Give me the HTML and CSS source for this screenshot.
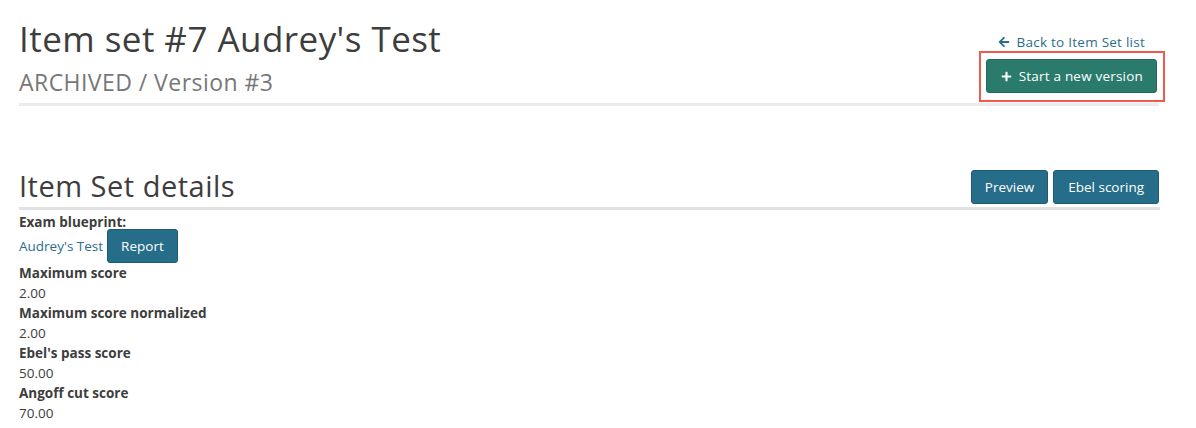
FILE: index.html
```html
<!DOCTYPE html>
<html>
<head>
<meta charset="utf-8">
<link rel="stylesheet" href="styles.css">
</head>
<body>
<div class="page">
  <header class="page-header">
    <div class="titles">
      <h1 class="title">Item set #7 Audrey's Test</h1>
      <div class="subtitle">ARCHIVED / Version #3</div>
    </div>
    <div class="header-actions">
      <a class="back-link" href="#"><svg class="arrow" viewBox="0 0 448 512" width="12" height="12"><path fill="currentColor" d="M257.5 445.1l-22.2 22.2c-9.4 9.4-24.6 9.4-33.9 0L7 273c-9.4-9.4-9.4-24.6 0-33.9L201.4 44.7c9.4-9.4 24.6-9.4 33.9 0l22.2 22.2c9.5 9.5 9.3 25-.4 34.3L136.6 216H424c13.3 0 24 10.7 24 24v32c0 13.3-10.7 24-24 24H136.6l120.5 114.8c9.8 9.3 10 24.8.4 34.3z"/></svg>Back to Item Set list</a>
      <div class="highlight">
        <button class="btn btn-green"><svg class="plus" viewBox="0 0 448 512" width="11" height="11"><path fill="currentColor" d="M416 208H272V64c0-17.67-14.33-32-32-32h-32c-17.67 0-32 14.33-32 32v144H32c-17.67 0-32 14.33-32 32v32c0 17.67 14.33 32 32 32h144v144c0 17.67 14.33 32 32 32h32c17.67 0 32-14.33 32-32V304h144c17.67 0 32-14.33 32-32v-32c0-17.67-14.33-32-32-32z"/></svg>Start a new version</button>
      </div>
    </div>
  </header>

  <section class="details">
    <div class="section-head">
      <h2 class="section-title">Item Set details</h2>
      <div class="section-actions">
        <button class="btn btn-blue">Preview</button>
        <button class="btn btn-blue btn-ebel">Ebel scoring</button>
      </div>
    </div>
    <dl class="fields">
      <dt>Exam blueprint:</dt>
      <dd class="blueprint"><a class="link" href="#">Audrey's Test</a><button class="btn btn-blue btn-report">Report</button></dd>
      <dt>Maximum score</dt>
      <dd>2.00</dd>
      <dt>Maximum score normalized</dt>
      <dd>2.00</dd>
      <dt>Ebel's pass score</dt>
      <dd>50.00</dd>
      <dt>Angoff cut score</dt>
      <dd>70.00</dd>
    </dl>
  </section>
</div>
</body>
</html>
```

FILE: styles.css
```css
* { box-sizing: border-box; }
body {
  margin: 0;
  font-family: "Open Sans", "Liberation Sans", sans-serif;
  color: #3a3a3a;
  background: #fff;
}
.page {
  padding: 0 36px 0 19px;
  width: 1196px;
}
.page-header {
  display: flex;
  justify-content: space-between;
  align-items: flex-start;
  border-bottom: 3px solid #ebebeb;
  margin-right: 1px;
  height: 106px;
}
.title {
  margin: 0;
  padding-top: 17px;
  font-size: 35px;
  font-weight: 400;
  line-height: 44px;
  letter-spacing: 0.45px;
  color: #3d3d3d;
}
.subtitle {
  margin-top: 7px;
  font-size: 23px;
  line-height: 28px;
  letter-spacing: 0.45px;
  color: #777;
}
.header-actions {
  display: flex;
  flex-direction: column;
  align-items: flex-end;
  padding-top: 33px;
  margin-right: -6px;
}
.back-link {
  display: flex;
  align-items: center;
  gap: 6px;
  color: #2b6e8c;
  text-decoration: none;
  font-size: 13.5px;
  line-height: 18px;
  letter-spacing: 0.25px;
  margin-right: 20px;
}
.arrow { display: block; }
.highlight {
  border: 2px solid #f0594b;
  padding: 6px 6px 7px 5px;
}
.btn {
  font-family: inherit;
  border-radius: 3px;
  color: #fff;
  cursor: pointer;
  font-size: 13.5px;
}
.btn-green {
  display: flex;
  align-items: center;
  gap: 7px;
  height: 34px;
  padding: 0 13px 0 14px;
  letter-spacing: 0.2px;
  background: #2a7b6c;
  border: 1px solid #24695c;
}
.plus { display: block; }
.details { margin-top: 62px; }
.section-head {
  display: flex;
  justify-content: space-between;
  align-items: flex-end;
  border-bottom: 3px solid #e2e2e2;
  padding-bottom: 3px;
}
.section-title {
  margin: 0;
  font-size: 29px;
  font-weight: 400;
  line-height: 36px;
  letter-spacing: 0.5px;
  color: #3d3d3d;
}
.section-actions {
  display: flex;
  gap: 5px;
  margin-right: 1px;
  margin-bottom: 0;
}
.btn-blue {
  background: #256d88;
  border: 1px solid #1c5b72;
  height: 34px;
  padding: 0 13px;
}
.btn-ebel { padding: 0 14px; }
.fields {
  margin: 2px 0 0;
  font-size: 13.5px;
  line-height: 20px;
}
.fields dt {
  font-weight: 700;
  color: #3d3d3d;
}
.fields dd {
  margin: 0;
  color: #3d3d3d;
}
.fields dd.blueprint {
  display: flex;
  align-items: center;
  gap: 4px;
  height: 34px;
  margin-top: -3px;
  margin-bottom: 0;
}
.link {
  color: #2b6e8c;
  text-decoration: none;
}
.btn-report { padding: 0 13px; }
```
